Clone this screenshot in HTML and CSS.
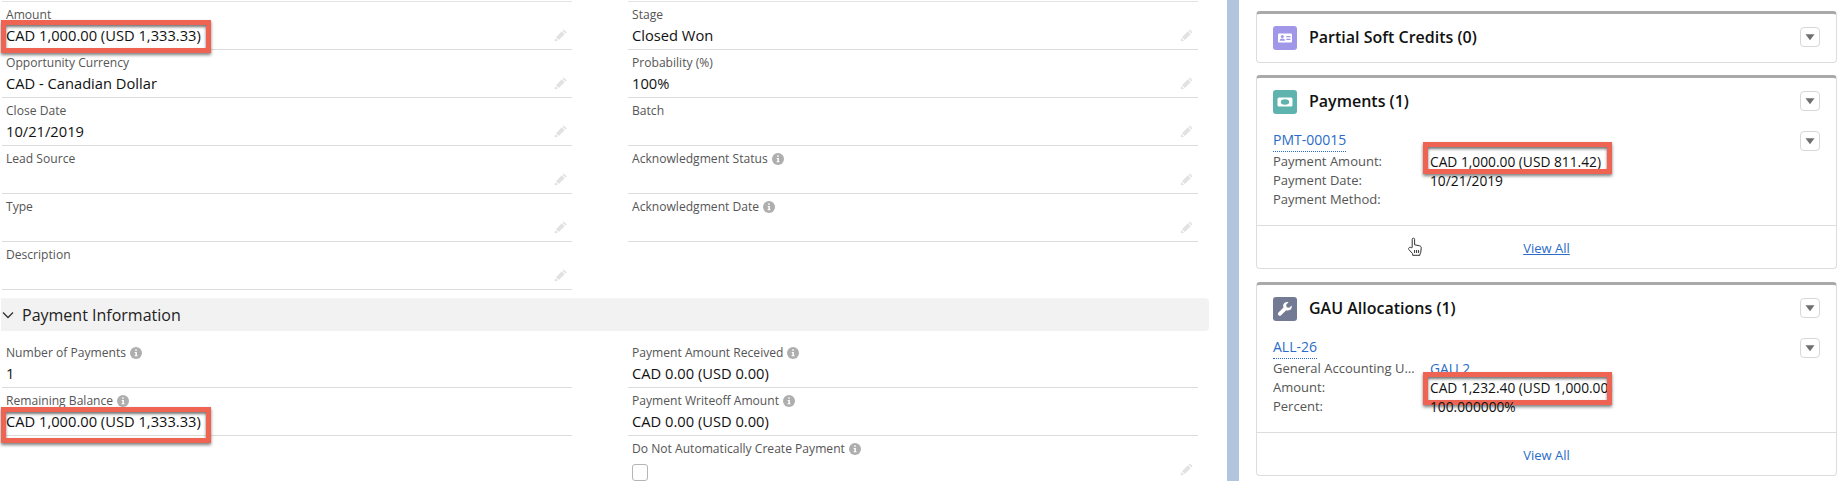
FILE: index.html
```html
<!DOCTYPE html>
<html lang="en">
<head>
  <meta charset="UTF-8" />
  <title>Opportunity Details</title>
  <link rel="stylesheet" href="styles.css">
</head>
<body>
  <svg class="sprites" width="0" height="0">
    <symbol id="pencil" viewBox="0 0 16 16">
      <path d="M11.2 1.6l3.2 3.2-1.4 1.4-3.2-3.2zM9 3.8L12.200 7l-6.700 6.700-3.200-3.200zM1.500 11.300l3.200 3.200L.8 15.200z" fill="currentColor"/>
    </symbol>
    <symbol id="info" viewBox="0 0 12 12">
      <circle cx="6" cy="6" r="6" fill="currentColor"/>
      <rect x="5.100" y="2.200" width="1.800" height="1.800" rx=".9" fill="#fff"/>
      <path d="M4.700 5h2.200v3.300h.6v1H4.600v-1h.8V6h-.7z" fill="#fff"/>
    </symbol>
    <symbol id="caret" viewBox="0 0 20 20">
      <path d="M5 7h10l-5 6.500z" fill="currentColor"/>
    </symbol>
  </svg>

  <div class="page">
    <main class="details">
      <div class="field-grid top-rule">
        <div class="field">
          <span class="field-label">Amount</span>
          <span class="field-value">CAD 1,000.00 (USD 1,333.33)</span>
          <svg class="pencil"><use href="#pencil"/></svg>
          <i class="mark mark-field"></i>
        </div>
        <div class="field">
          <span class="field-label">Stage</span>
          <span class="field-value">Closed Won</span>
          <svg class="pencil"><use href="#pencil"/></svg>
        </div>
        <div class="field">
          <span class="field-label">Opportunity Currency</span>
          <span class="field-value">CAD - Canadian Dollar</span>
          <svg class="pencil"><use href="#pencil"/></svg>
        </div>
        <div class="field">
          <span class="field-label">Probability (%)</span>
          <span class="field-value">100%</span>
          <svg class="pencil"><use href="#pencil"/></svg>
        </div>
        <div class="field">
          <span class="field-label">Close Date</span>
          <span class="field-value">10/21/2019</span>
          <svg class="pencil"><use href="#pencil"/></svg>
        </div>
        <div class="field">
          <span class="field-label">Batch</span>
          <span class="field-value"></span>
          <svg class="pencil"><use href="#pencil"/></svg>
        </div>
        <div class="field">
          <span class="field-label">Lead Source</span>
          <span class="field-value"></span>
          <svg class="pencil"><use href="#pencil"/></svg>
        </div>
        <div class="field">
          <span class="field-label">Acknowledgment Status <svg class="info"><use href="#info"/></svg></span>
          <span class="field-value"></span>
          <svg class="pencil"><use href="#pencil"/></svg>
        </div>
        <div class="field">
          <span class="field-label">Type</span>
          <span class="field-value"></span>
          <svg class="pencil"><use href="#pencil"/></svg>
        </div>
        <div class="field">
          <span class="field-label">Acknowledgment Date <svg class="info"><use href="#info"/></svg></span>
          <span class="field-value"></span>
          <svg class="pencil"><use href="#pencil"/></svg>
        </div>
        <div class="field">
          <span class="field-label">Description</span>
          <span class="field-value"></span>
          <svg class="pencil"><use href="#pencil"/></svg>
        </div>
      </div>

      <div class="section-head">
        <svg class="chevron" viewBox="0 0 12 8"><path d="M1 1.500l5 5 5-5" fill="none" stroke="currentColor" stroke-width="1.300"/></svg>
        <span>Payment Information</span>
      </div>

      <div class="field-grid">
        <div class="field">
          <span class="field-label">Number of Payments <svg class="info"><use href="#info"/></svg></span>
          <span class="field-value">1</span>
        </div>
        <div class="field">
          <span class="field-label">Payment Amount Received <svg class="info"><use href="#info"/></svg></span>
          <span class="field-value">CAD 0.00 (USD 0.00)</span>
        </div>
        <div class="field">
          <span class="field-label">Remaining Balance <svg class="info"><use href="#info"/></svg></span>
          <span class="field-value">CAD 1,000.00 (USD 1,333.33)</span>
          <i class="mark mark-balance"></i>
        </div>
        <div class="field">
          <span class="field-label">Payment Writeoff Amount <svg class="info"><use href="#info"/></svg></span>
          <span class="field-value">CAD 0.00 (USD 0.00)</span>
        </div>
        <div class="field no-rule"></div>
        <div class="field no-rule">
          <span class="field-label">Do Not Automatically Create Payment <svg class="info"><use href="#info"/></svg></span>
          <span class="field-value"><span class="checkbox"></span></span>
          <svg class="pencil"><use href="#pencil"/></svg>
        </div>
      </div>
    </main>

    <div class="gutter"></div>

    <aside class="sidebar">
      <section class="card">
        <header class="card-head">
          <span class="card-icon icon-credits">
            <svg viewBox="0 0 24 24"><path d="M6 7.500h12a1 1 0 0 1 1 1v7a1 1 0 0 1-1 1H6a1 1 0 0 1-1-1v-7a1 1 0 0 1 1-1z" fill="#fff"/><circle cx="9.300" cy="10.600" r="1.500" fill="#a097e8"/><path d="M6.600 14.800c0-1.500 1.200-2.200 2.700-2.200s2.700.7 2.700 2.200z" fill="#a097e8"/><path d="M13.300 10h4.200v1.200h-4.200zM13.300 12.800h4.200V14h-4.200z" fill="#a097e8"/></svg>
          </span>
          <h3 class="card-title">Partial Soft Credits (0)</h3>
          <button class="menu-btn"><svg><use href="#caret"/></svg></button>
        </header>
      </section>

      <section class="card">
        <header class="card-head">
          <span class="card-icon icon-payments">
            <svg viewBox="0 0 24 24"><path d="M6 7.500h12a1.500 1.500 0 0 1 1.500 1.500v6a1.500 1.500 0 0 1-1.500 1.500H6A1.500 1.500 0 0 1 4.500 15V9A1.500 1.500 0 0 1 6 7.500z" fill="#fff"/><ellipse cx="12" cy="12" rx="4.200" ry="2.800" fill="#5fb3ae"/></svg>
          </span>
          <h3 class="card-title">Payments (1)</h3>
          <button class="menu-btn"><svg><use href="#caret"/></svg></button>
        </header>
        <div class="record">
          <div class="record-main">
            <a class="record-link">PMT-00015</a>
            <dl class="record-rows">
              <dt>Payment Amount:</dt>
              <dd>CAD 1,000.00 (USD 811.42)<i class="mark mark-payment"></i></dd>
              <dt>Payment Date:</dt>
              <dd>10/21/2019</dd>
              <dt>Payment Method:</dt>
              <dd></dd>
            </dl>
          </div>
          <button class="menu-btn"><svg><use href="#caret"/></svg></button>
        </div>
        <footer class="card-foot">
          <a class="view-all hovered">View All</a>
          <svg class="cursor" viewBox="0 0 16 20"><path d="M5.200 10.500V2.400a1.200 1.200 0 0 1 2.400 0v5.400l5 1c1 .2 1.700 1 1.600 2.100l-.4 4.300c-.1.700-.4 1.300-.9 1.800v1.300H5.700v-1.500L2 12.700c-.6-.6-.6-1.500 0-2 .6-.6 1.500-.5 2.100.1z" fill="#fff" stroke="#333" stroke-width="1"/><path d="M7.600 13v3M9.600 13v3M11.600 13v3" stroke="#333" stroke-width="1"/></svg>
        </footer>
      </section>

      <section class="card">
        <header class="card-head">
          <span class="card-icon icon-gau">
            <svg viewBox="-2 -2 28 28"><path d="M19.800 7.800l-2.900 2.800-3-.6-.6-3 2.800-2.800c-2.300-.7-4.700.1-5.700 2.100-.7 1.300-.7 2.800-.1 4L4.400 16.200c-.9.900-.9 2.300 0 3.100.9.900 2.300.9 3.100 0l5.900-5.900c1.300.6 2.800.6 4.100-.1 1.900-1 2.800-3.300 2.300-5.500z" fill="#fff"/></svg>
          </span>
          <h3 class="card-title">GAU Allocations (1)</h3>
          <button class="menu-btn"><svg><use href="#caret"/></svg></button>
        </header>
        <div class="record">
          <div class="record-main">
            <a class="record-link">ALL-26</a>
            <dl class="record-rows">
              <dt>General Accounting Unit:</dt>
              <dd><a class="plain-link">GAU 2</a></dd>
              <dt>Amount:</dt>
              <dd>CAD 1,232.40 (USD 1,000.00)<i class="mark mark-allocation"></i></dd>
              <dt>Percent:</dt>
              <dd>100.000000%</dd>
            </dl>
          </div>
          <button class="menu-btn"><svg><use href="#caret"/></svg></button>
        </div>
        <footer class="card-foot">
          <a class="view-all">View All</a>
        </footer>
      </section>
    </aside>
  </div>
</body>
</html>
```

FILE: styles.css
```css
html, body {
  margin: 0;
  height: 100%;
  background-color: #fff;
  overflow: hidden;
}

body {
  font-family: "Open Sans", sans-serif;
  font-size: 13px;
  color: #111;
}

.sprites {
  position: absolute;
}

.page {
  display: flex;
  height: 481px;
  overflow: hidden;
}

/* left side */
.details {
  width: 1227px;
  padding-left: 1px;
  box-sizing: border-box;
}

.field-grid {
  display: grid;
  grid-template-columns: 570px 570px;
  column-gap: 56px;
  padding-left: 1px;
}

.top-rule {
  border-top: 2px solid transparent;
}

.field {
  position: relative;
  display: grid;
  grid-template-columns: 1fr auto;
  grid-template-rows: 18px 22px;
  align-items: center;
  height: 48px;
  box-sizing: border-box;
  padding: 4px 4px 0;
  border-bottom: 1px solid #dcdcdc;
}

.top-rule .field:nth-child(-n+2) {
  box-shadow: 0 -1px 0 #e4e4e4;
}

.no-rule {
  border-bottom: none;
}

.field-label {
  grid-column: 1 / -1;
  display: flex;
  align-items: center;
  gap: 4px;
  font-size: 12.1px;
  line-height: 18px;
  color: #555;
}

.field-value {
  font-size: 14.7px;
  line-height: 22px;
  color: #111;
}

.pencil {
  width: 14px;
  height: 14px;
  color: #e2e2e2;
}

.info {
  width: 12px;
  height: 12px;
  color: #aeaeae;
}

.checkbox {
  display: block;
  width: 14px;
  height: 15px;
  border: 1px solid #b5b5b5;
  border-radius: 3px;
  margin-top: 6px;
}

.section-head {
  display: flex;
  align-items: center;
  gap: 6px;
  height: 32px;
  margin: 9px 18px 9px 0;
  padding-left: 1px;
  background-color: #f2f2f2;
  border-radius: 0 4px 4px 0;
  box-shadow: 0 -1px 0 #f4f4f4;
  font-size: 16px;
  color: #222;
}

.chevron {
  width: 12px;
  height: 8px;
  margin-right: 2px;
  color: #333;
}

.gutter {
  width: 12px;
  background-color: #b1c5df;
}

/* right side */
.sidebar {
  display: flex;
  flex-direction: column;
  gap: 12px;
  width: 581px;
  margin-left: 17px;
  padding-top: 11px;
}

.card {
  border: 1px solid #dddddd;
  border-top: 3px solid #a9a9a9;
  border-radius: 4px;
  box-sizing: border-box;
}

.card + .card + .card {
  margin-top: 1px;
}

.card-head {
  display: flex;
  align-items: center;
  gap: 12px;
  padding: 12px 16px;
}

.card-head + .record {
  margin-top: -12px;
}

.card-icon {
  width: 24px;
  height: 24px;
  border-radius: 3px;
  flex: none;
}

.card-icon svg {
  display: block;
  width: 24px;
  height: 24px;
}

.icon-credits { background-color: #a097e8; }
.icon-payments { background-color: #5fb3ae; }
.icon-gau { background-color: #737a94; }

.card-title {
  flex: 1;
  margin: 0 0 2px;
  font-size: 16px;
  font-weight: 600;
  color: #111;
}

.card-head .menu-btn {
  margin-bottom: 2px;
}

.menu-btn {
  flex: none;
  width: 20px;
  height: 20px;
  padding: 0;
  background-color: #fff;
  border: 1px solid #d8d8d8;
  border-radius: 4px;
  color: #6f6f6f;
}

.menu-btn svg {
  display: block;
  width: 18px;
  height: 18px;
}

.record {
  display: flex;
  align-items: flex-start;
  padding: 17px 16px 16px;
}

.record-main {
  flex: 1;
  min-width: 0;
}

.record-link {
  display: inline-block;
  height: 21px;
  box-sizing: border-box;
  line-height: 18px;
  font-size: 14px;
  color: #2a6cc8;
  border-bottom: 1px dotted #2a6cc8;
}

.record-rows {
  display: grid;
  grid-template-columns: 157px 1fr;
  grid-auto-rows: 19px;
  margin: 0;
  line-height: 19px;
}

.record-rows dt {
  color: #555;
  padding-right: 14px;
  overflow: hidden;
  white-space: nowrap;
  text-overflow: ellipsis;
}

.record-rows dd {
  position: relative;
  margin: 0;
  font-size: 13.75px;
  white-space: nowrap;
}

.plain-link {
  color: #2a6cc8;
}

.card-foot {
  position: relative;
  display: flex;
  align-items: center;
  justify-content: center;
  height: 40px;
  padding-top: 2px;
  border-top: 1px solid #dddddd;
}

.view-all {
  color: #2a6cc8;
  font-size: 13px;
}

.hovered {
  text-decoration: underline;
}

.cursor {
  position: absolute;
  left: 150px;
  top: 11px;
  width: 16px;
  height: 20px;
}

/* red annotation boxes drawn over the screenshot */
.mark {
  position: absolute;
  box-sizing: border-box;
  border: 5px solid #ee6352;
  box-shadow: 0 2px 3px rgba(0, 0, 0, .5), inset 0 2px 3px rgba(0, 0, 0, .55);
}

.mark-field {
  left: -1px;
  top: 18px;
  width: 210px;
  height: 33px;
}

.mark-balance {
  left: -1px;
  top: 19px;
  width: 210px;
  height: 36px;
}

.mark-payment {
  left: -7px;
  top: -10px;
  width: 189px;
  height: 32px;
}

.mark-allocation {
  left: -7px;
  top: -6px;
  width: 189px;
  height: 33px;
}
```
